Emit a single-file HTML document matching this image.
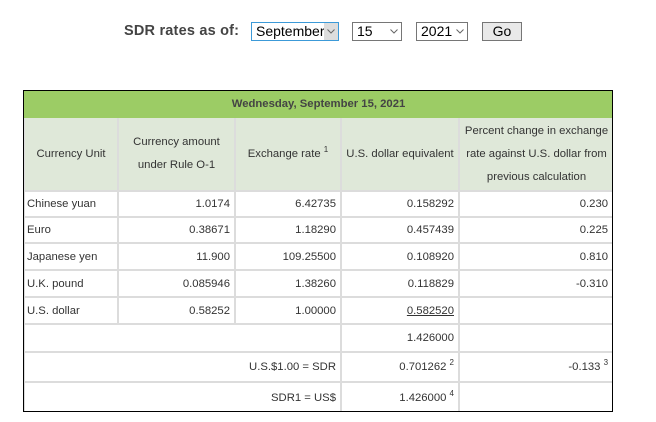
<!DOCTYPE html>
<html><head><style>
body{margin:0;background:#fff;font-family:"Liberation Sans",Arial,sans-serif;color:#333;width:656px;height:422px;position:relative;overflow:hidden}
.top{position:absolute;top:21px;left:0;width:656px;height:22px}
.lbl{position:absolute;left:124px;top:2px;font-weight:bold;font-size:14.5px;color:#444;letter-spacing:0.2px}
.sel{position:absolute;top:1px;height:19px;border:1px solid #767676;box-sizing:border-box;font-size:14px;line-height:17px;padding-left:4px;color:#000;background:#fff}
.sel .ar{position:absolute;right:0;top:0;width:14px;height:17px;text-align:center;color:#666}
.sel .ar svg{position:absolute;left:3px;top:6px}
.btn{position:absolute;left:482px;top:1px;width:40px;height:19px;box-sizing:border-box;border:1px solid #767676;background:#e9e9e9;font-size:14px;text-align:center;line-height:17px;color:#000}
.wrap{position:absolute;left:23px;top:90px;width:590px;height:322px;border:1px solid #000;box-sizing:border-box;overflow:hidden}
table{border-collapse:collapse;table-layout:fixed;width:592px;margin:-1px 0 0 -1px;font-size:11.3px}
td{border:2px solid #dcdcdc;padding:0 4px 0 4px;text-align:right;white-space:nowrap;overflow:hidden}
td:last-child{padding-right:7px}
tr.g td{background:#9ccc65;text-align:center;font-weight:bold;color:#444;border-color:#9ccc65;height:24px}
tr.h td{background:#dfe8d9;text-align:center;line-height:23px;white-space:normal;height:72px;padding:0 2px}
tr.h td:last-child{padding:0 4px 0 2px}
td.l{text-align:left;padding-left:2px}
sup{font-size:8px;vertical-align:5px;line-height:0}
</style></head><body>
<div class="top">
<div class="lbl">SDR rates as of:</div>
<div class="sel" style="left:251px;width:88px;border-color:#3c9ad8">September<div class="ar" style="background:#ddd"><svg width="8" height="5"><path d="M0.5 0.5L4 4L7.5 0.5" fill="none" stroke="#666"/></svg></div></div>
<div class="sel" style="left:352px;width:50px">15<div class="ar"><svg width="8" height="5"><path d="M0.5 0.5L4 4L7.5 0.5" fill="none" stroke="#666"/></svg></div></div>
<div class="sel" style="left:416px;width:52px">2021<div class="ar"><svg width="8" height="5"><path d="M0.5 0.5L4 4L7.5 0.5" fill="none" stroke="#666"/></svg></div></div>
<div class="btn">Go</div>
</div>
<div class="wrap">
<table>
<colgroup><col style="width:94px"><col style="width:117px"><col style="width:106px"><col style="width:118px"><col style="width:157px"></colgroup>
<tr class="g"><td colspan="5">Wednesday, September 15, 2021</td></tr>
<tr class="h"><td>Currency Unit</td><td>Currency amount under Rule O-1</td><td>Exchange rate <sup>1</sup></td><td style="white-space:nowrap">U.S. dollar equivalent</td><td>Percent change in exchange rate against U.S. dollar from previous calculation</td></tr>
<tr style="height:26px"><td class="l">Chinese yuan</td><td>1.0174</td><td>6.42735</td><td>0.158292</td><td>0.230</td></tr>
<tr style="height:26px"><td class="l">Euro</td><td>0.38671</td><td>1.18290</td><td>0.457439</td><td>0.225</td></tr>
<tr style="height:27px"><td class="l">Japanese yen</td><td>11.900</td><td>109.25500</td><td>0.108920</td><td>0.810</td></tr>
<tr style="height:27px"><td class="l">U.K. pound</td><td>0.085946</td><td>1.38260</td><td>0.118829</td><td>-0.310</td></tr>
<tr style="height:27px"><td class="l">U.S. dollar</td><td>0.58252</td><td>1.00000</td><td><u>0.582520</u></td><td></td></tr>
<tr style="height:28px"><td colspan="3"></td><td>1.426000</td><td></td></tr>
<tr style="height:30px"><td colspan="3">U.S.$1.00 = SDR</td><td>0.701262 <sup>2</sup></td><td>-0.133 <sup>3</sup></td></tr>
<tr style="height:31px"><td colspan="3">SDR1 = US$</td><td>1.426000 <sup>4</sup></td><td></td></tr>
</table>
</div>
</body></html>
